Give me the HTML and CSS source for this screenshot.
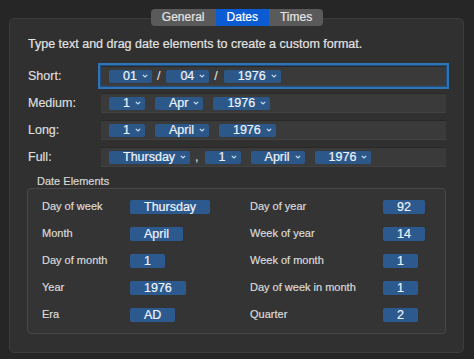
FILE: index.html
```html
<!DOCTYPE html>
<html lang="en">
<head>
    <meta charset="UTF-8">
    <meta name="viewport" content="width=device-width, initial-scale=1.0">
    <title>Date formats</title>
    <link rel="stylesheet" href="styles.css">
</head>
<body>

<nav class="tabs">
    <span class="tab">General</span>
    <span class="tab active">Dates</span>
    <span class="tab">Times</span>
</nav>

<section class="panel">
    <p class="hint">Type text and drag date elements to create a custom format.</p>

    <div class="formats">
        <div class="label">Short:</div>
        <div class="field focused">
            <span class="token">01<svg class="chev" viewBox="0 0 6 4"><polyline points="0.8,0.8 3,3 5.2,0.8"/></svg></span>
            <span class="sep">/</span>
            <span class="token">04<svg class="chev" viewBox="0 0 6 4"><polyline points="0.8,0.8 3,3 5.2,0.8"/></svg></span>
            <span class="sep">/</span>
            <span class="token">1976<svg class="chev" viewBox="0 0 6 4"><polyline points="0.8,0.8 3,3 5.2,0.8"/></svg></span>
        </div>

        <div class="label">Medium:</div>
        <div class="field">
            <span class="token">1<svg class="chev" viewBox="0 0 6 4"><polyline points="0.8,0.8 3,3 5.2,0.8"/></svg></span>
            <span class="token">Apr<svg class="chev" viewBox="0 0 6 4"><polyline points="0.8,0.8 3,3 5.2,0.8"/></svg></span>
            <span class="token">1976<svg class="chev" viewBox="0 0 6 4"><polyline points="0.8,0.8 3,3 5.2,0.8"/></svg></span>
        </div>

        <div class="label">Long:</div>
        <div class="field">
            <span class="token">1<svg class="chev" viewBox="0 0 6 4"><polyline points="0.8,0.8 3,3 5.2,0.8"/></svg></span>
            <span class="token">April<svg class="chev" viewBox="0 0 6 4"><polyline points="0.8,0.8 3,3 5.2,0.8"/></svg></span>
            <span class="token">1976<svg class="chev" viewBox="0 0 6 4"><polyline points="0.8,0.8 3,3 5.2,0.8"/></svg></span>
        </div>

        <div class="label">Full:</div>
        <div class="field">
            <span class="token">Thursday<svg class="chev" viewBox="0 0 6 4"><polyline points="0.8,0.8 3,3 5.2,0.8"/></svg></span>
            <span class="sep">,</span>
            <span class="token">1<svg class="chev" viewBox="0 0 6 4"><polyline points="0.8,0.8 3,3 5.2,0.8"/></svg></span>
            <span class="token">April<svg class="chev" viewBox="0 0 6 4"><polyline points="0.8,0.8 3,3 5.2,0.8"/></svg></span>
            <span class="token">1976<svg class="chev" viewBox="0 0 6 4"><polyline points="0.8,0.8 3,3 5.2,0.8"/></svg></span>
        </div>
    </div>

    <div class="elements-title">Date Elements</div>
    <div class="elements">
        <span class="el-label">Day of week</span>
        <span><span class="chip">Thursday</span></span>
        <span class="el-label">Day of year</span>
        <span><span class="chip">92</span></span>

        <span class="el-label">Month</span>
        <span><span class="chip">April</span></span>
        <span class="el-label">Week of year</span>
        <span><span class="chip">14</span></span>

        <span class="el-label">Day of month</span>
        <span><span class="chip">1</span></span>
        <span class="el-label">Week of month</span>
        <span><span class="chip">1</span></span>

        <span class="el-label">Year</span>
        <span><span class="chip">1976</span></span>
        <span class="el-label">Day of week in month</span>
        <span><span class="chip">1</span></span>

        <span class="el-label">Era</span>
        <span><span class="chip">AD</span></span>
        <span class="el-label">Quarter</span>
        <span><span class="chip">2</span></span>
    </div>
</section>

</body>
</html>
```

FILE: styles.css
```css
/* Ventana de formatos de fecha, tema oscuro */
body {
    margin: 0;
    padding: 9px 0 0;
    background-color: #262626;
    font-family: "Liberation Sans", Arial, sans-serif;
    color: #dcdcdc;
    -webkit-text-stroke: 0.2px currentColor; /* texto un poco más grueso, como en macOS */
}

/* Pestañas */
.tabs {
    position: relative;
    z-index: 1;
    display: flex;
    width: max-content;
    margin: 0 auto;
    height: 17px;
    background-color: #5a5a5a;
    border-radius: 4px;
    overflow: hidden;
}
.tab {
    padding: 0 11px;
    font-size: 12px;
    line-height: 17px;
    color: #e4e4e4;
}
.tab.active {
    background-color: #0b5bd3;
    color: #fff;
}

/* Panel principal */
.panel {
    margin: -8px 10px 0 9px;
    padding: 18px 17px 18px 18px;
    background-color: #303030;
    border: 1px solid #3c3c3c;
    border-radius: 5px;
}
.hint {
    margin: 0;
    font-size: 12.5px;
    line-height: 15px;
    color: #e2e2e2;
}

/* Filas de formato */
.formats {
    display: grid;
    grid-template-columns: 73px 1fr;
    row-gap: 7px;
    margin-top: 14px;
}
.label {
    font-size: 12.5px;
    line-height: 20px;
    color: #dedede;
}
.field {
    display: flex;
    align-items: center;
    gap: 10px;
    height: 20px;
    padding: 0 0 0 8px;
    background-color: #3a3a3a;
    border-top: 1px solid #292929;
    border-bottom: 1px solid #414141;
    box-sizing: border-box;
}
.field.focused {
    box-shadow: 0 0 0 1px #1e4f80, 0 0 0 3px #2f74b6;
}
.token {
    display: inline-flex;
    align-items: center;
    gap: 5px;
    height: 13px;
    padding: 0 4px 0 14px;
    background-color: #2c5889;
    border-radius: 2px;
    font-size: 12.5px;
    line-height: 13px;
    color: #eef3f9;
}
.chev {
    width: 6px;
    height: 4px;
    fill: none;
    stroke: #c9dbf0;
    stroke-width: 1.2;
}
.sep {
    margin: 0 -4px 0 -5px;
    font-size: 12.5px;
    color: #dcdcdc;
}

/* Elementos de fecha */
.elements-title {
    margin: 8px 0 0 9px;
    font-size: 11px;
    line-height: 13px;
    color: #d6d6d6;
}
.elements {
    display: grid;
    grid-template-columns: 88px 120px 133px auto;
    grid-auto-rows: 14px;
    row-gap: 13px;
    align-items: center;
    margin-left: -1px;
    padding: 10px 0 12px 14px;
    background-color: #343434;
    border: 1px solid #484848;
    border-radius: 4px;
}
.el-label {
    font-size: 11px;
    color: #dadada;
}
.chip {
    display: inline-block;
    height: 14px;
    padding: 0 14px;
    background-color: #2d5a8e;
    border-radius: 2px;
    font-size: 12.5px;
    line-height: 14px;
    color: #eef3f9;
}
```
